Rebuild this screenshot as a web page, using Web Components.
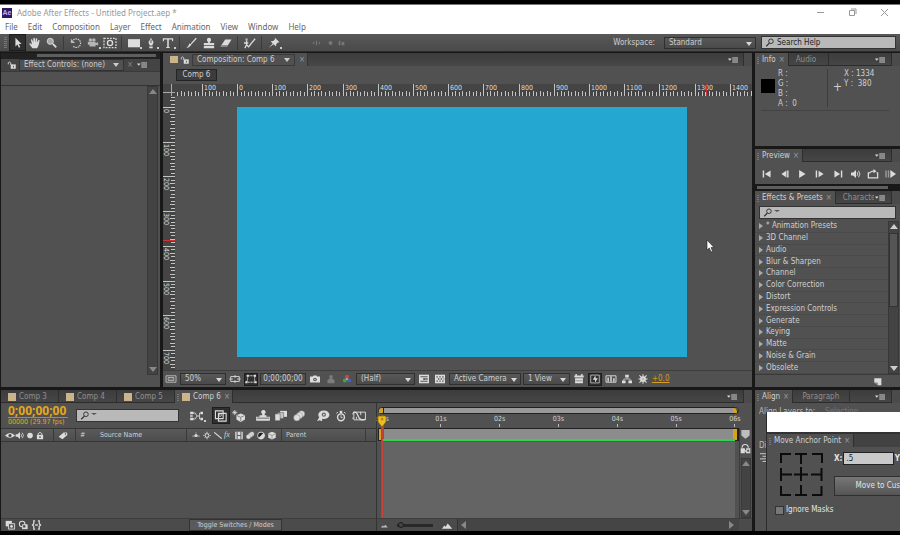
<!DOCTYPE html>
<html lang="en">
<head>
<meta charset="utf-8">
<title>Adobe After Effects - Untitled Project.aep *</title>
<style>
html,body{margin:0;height:100%}
body{background:#000;overflow:hidden;color:#cfcfcf;font:8px/12px "DejaVu Sans Condensed","Noto Sans",sans-serif}
</style>
</head>
<body>
<ae-app></ae-app>
<script>
const BASE = `*{box-sizing:border-box}
button,input,select{font:inherit;color:inherit;margin:0;padding:0;border:0;background:none;border-radius:0;outline:0}
:host{display:block;box-sizing:border-box}[hidden]{display:none}`;

function define(name, css, render) {
  customElements.define(name, class extends HTMLElement {
    connectedCallback() {
      if (this.shadowRoot) return;
      const root = this.attachShadow({mode: 'open'});
      root.innerHTML = `<style>${BASE}${css}</style>${typeof render === 'function' ? render(this) : render}`;
    }
  });
}
const attr = (el, n, d = '') => el.getAttribute(n) ?? d;

/* Icons are drawn in a 16 x 14 box with currentColor. */
const S = 'fill="none" stroke="currentColor"';
const ICONS = {
  arrow: '<path d="M5 1v10l2.400-2.200L9 12.500l1.600-.7L9 8.300h3.200z"/>',
  hand: '<path d="M5 13L1.500 8.500q-.6-1.600.9-1.300L4.500 8.800 3.300 3.500q0-1.200 1.300-.8L6 6.500 6 1.600q.9-1.400 1.800 0L8.200 6.300l.8-4.500q1.100-1 1.700.2L10.300 6.800l1.500-3q1.200-.8 1.600.3L12.300 9.300 10.500 13z"/>',
  zoom: `<circle cx="6" cy="5" r="3.600" fill="#a8a8a8" stroke="currentColor"/><path ${S} stroke-width="2" d="M9 8l4 4"/>`,
  rotate: `<path ${S} stroke="#aaa" stroke-width="1.300" stroke-dasharray="1.600 1" d="M5 3.500a5 5 0 1 1-.5 7"/><path fill="#bbb" d="M2 2v5h5z"/>`,
  cam: '<g fill="#b5b5b5"><circle cx="5" cy="3.500" r="2"/><circle cx="9" cy="3.500" r="2"/><path d="M2 5.500h9v1.500l3-1v4l-3-1v2H4V9H2z"/></g>',
  pan: `<circle cx="8" cy="7" r="3" ${S} stroke-width="1.600"/><path ${S} stroke-width="1.500" stroke-dasharray="2 1.500" d="M1 1.500h14v11H1z"/>`,
  rect: '<path d="M1 2.500h14v9.500H1z"/>',
  pen: `<path d="M8 1L5 6l1.500 4h3L11 6zM6 11h4v2H6z"/><path stroke="#444" d="M8 3v4"/>`,
  type: '<path d="M2 1.500h12v3.500h-1l-.6-2H8.900V11.600l1.300.5v.7H5.800v-.7l1.300-.5V3H3.600L3 5H2z"/>',
  brush: `<path ${S} stroke-width="1.500" d="M13 1.500L7 8"/><path d="M7.500 8.500Q5 13 1.500 12.500 4 11 5 7.500z"/>`,
  stamp: '<circle cx="8" cy="3.500" r="2.500"/><path d="M7 5h2v2h5v2.500H2V7h5zM2 10.500h12V13H2z"/>',
  eraser: '<path d="M7 3h7.500L9 11.500H1.500z"/><path fill="#777" d="M3 9.500h7l-1 2H1.500z"/>',
  roto: `<circle cx="4" cy="3" r="1.500" fill="#aaa"/><path ${S} stroke="#aaa" stroke-width="1.500" d="M1 7h5M4 4v5l-2 4M4 9l3 3"/><path ${S} stroke-width="1.500" d="M14 2L9 8l-2 3"/>`,
  pin: '<path d="M9 1l5.500 5-2 .5-2 2 0 2.500-3-2.500L2 12.500 6.500 7.500 4 5l3-.3 2-1.700z"/>',
  mini1: '<g fill="#777"><path d="M1 7l3-3v6zM15 7l-3-3v6z"/><path d="M7 3h2v8H7z"/></g>',
  mini2: '<g fill="#777"><circle cx="8" cy="7" r="3.500"/></g>',
  mini3: '<g fill="#777"><path d="M3 3h3v8H3zM8 5h5v6H8z"/></g>',
  lock: `<path ${S} stroke-width="1.400" d="M2 6V3.500q1.700-3 4 0V7"/><path d="M6 6h8v7H6z"/><path fill="#444" d="M9.500 8h1.400v3H9.500z"/>`,
  menu: '<path d="M1 5h5L3.500 8z"/><path fill="#999" d="M7 3h8v8H7z"/><path stroke="#666" d="M7 5.500h8M7 8.500h8"/>',
  first: '<path d="M2 2h2v10H2zM13 2v10L5 7z"/>',
  prev: '<path d="M10 2v10L3 7zM11 2h2v10h-2z"/>',
  play: '<path d="M4 1.500v11l9-5.500z"/>',
  next: '<path d="M2 2h2v10H2zM6 2.500v9L13 7z"/>',
  last: '<path d="M3 2v10l8-5zM12 2h2v10h-2z"/>',
  sound: `<path d="M1 5h3l4-3.500v11L4 9H1z"/><path ${S} stroke="#999" stroke-width="1.300" d="M9.500 4.500q2 2.500 0 5M11.500 2.500q4 4.500 0 9"/>`,
  loop: `<path ${S} stroke-width="1.800" d="M4 5.500H1.500v7h13v-7H13M4 5q1-2 5-2"/><path d="M8.500 0L13 3 8.500 6z"/>`,
  ram: '<path fill="#999" d="M0 2h2v10H0zM3.500 2h2v10h-2z"/><path d="M7 1.500v11L15 7z"/>',
  grab: `<path ${S} stroke="#aaa" d="M1 2.500h14v9H1z"/><path ${S} stroke="#aaa" d="M4 5h8v4H4z"/><path fill="#aaa" d="M6 6h1v2H6zM9 6h1v2H9z"/>`,
  safe: `<path ${S} stroke-width="1.200" d="M2 3.500h12v7H2zM8 1.500v4M8 8.500v4M0 7h5M11 7h5"/>`,
  mask: `<path ${S} stroke-width="1.300" d="M3 2.500h11q-2 4 0 9H2Q4 7 3 2.500" stroke-dasharray="3 1"/><path d="M2 1h3v3H2zM12 1h3v3h-3zM0 10h3v3H0zM13 10h3v3h-3z"/>`,
  photo: '<path d="M1 3.500h4L6 2h4l1 1.500h4V12H1z"/><circle cx="8" cy="7.700" r="2.500" fill="#555"/><circle cx="8" cy="7.700" r="1" />',
  person: '<g fill="#7c7c7c"><circle cx="8" cy="4" r="2.500"/><path d="M6 6h4l3 3v4H3V9z"/></g>',
  rgb: '<circle cx="8" cy="4" r="2.800" fill="#c84b41"/><circle cx="5" cy="9" r="2.800" fill="#48a04c"/><circle cx="11" cy="9" r="2.800" fill="#4b5fc9"/><path fill="#ddd" d="M7 6h2v2H7z"/>',
  roi: `<path d="M1 1h14v12H1z"/><path fill="#555" d="M3 3h10v1.500H3zM3 9.500h10V11H3zM7 5.500h6v3H7z"/><path d="M9 6.500h3v1H9z"/>`,
  grid: '<path d="M1 1h14v12H1z"/><path stroke="#555" stroke-dasharray="2 2" stroke-width="2" d="M3 4h11M5 7h9M3 10h11"/>',
  cal: '<path d="M3 0h2v2H3zM11 0h2v2h-2zM1.500 2h13v3h-13zM2.500 6h11v7h-11z"/><path stroke="#777" d="M3 9.500h10"/>',
  fast: `<path ${S} d="M2 1.500h12v11H2z"/><path d="M8.500 2L5 8h3v4l4-6H9z"/>`,
  bars: `<path ${S} stroke-width="1.300" d="M1 2.500h14v9H1z"/><path d="M3 5h2v6H3zM7 3h2v8H7zM11 6h2v5h-2z"/>`,
  flow: `<path d="M5.500 1h5v4h-5zM1 9h5v4H1zM10 9h5v4h-5z"/><path ${S} d="M8 5v2M3.500 9V7h9v2"/>`,
  expo: `<circle cx="8" cy="7" r="4"/><path ${S} stroke-width="1.500" d="M8 .5v13M1.500 7h13M3 2l10 10M13 2L3 12"/><circle cx="8" cy="7" r="1" fill="#777"/>`,
  mag: '<circle cx="9.500" cy="5" r="3.700" fill="none" stroke="#2c2c2c" stroke-width="1.400"/><path d="M7 8l-5 5" stroke="#2c2c2c" stroke-width="1.800"/>',
  graph: `<path d="M0 2h4v3H0zM0 6h3v2H0zM0 9h4v3H0zM12 2h3v3h-3zM12 9h3v3h-3z"/><path ${S} d="M4 3.500h2l2 3.500-2 3.500H4M8 7h3M12 3.500h-1V10.500h1"/>`,
  layers: `<path ${S} stroke-width="1.300" d="M1.500 1h9v9h-9zM5 4h9v9H5z"/><circle cx="7" cy="6" r="1.500" ${S}/>`,
  draft: `<path d="M10 4l5 2v5l-5 3-5-3V6z"/><path stroke="#777" fill="none" d="M5.500 6.500L10 8.500l4.500-2M10 8.500V13"/><path ${S} stroke-width=".9" d="M3 0v6M0 3h6M1 1l4 4M5 1L1 5"/>`,
  shy: '<path d="M0 8h4V6h3V4.500a2.500 2.500 0 1 1 3 0V6h2v2h4v4.500H0z"/><path stroke="#555" d="M1 9.500h14"/>',
  blend: '<path d="M7 1h8v7H7z"/><path fill="#c4c4c4" stroke="#555" stroke-width=".6" d="M4 3h7v7H4z"/><path stroke="#555" stroke-width=".6" d="M1 4.500h6v8H1z"/>',
  blur: '<g stroke="#777" stroke-width=".5"><circle cx="11" cy="4.500" r="3.700"/><circle cx="8.500" cy="6.500" r="3.700"/><circle cx="5.500" cy="9" r="3.700"/></g>',
  brain: '<ellipse cx="9" cy="5.500" rx="6.500" ry="5"/><path d="M4 8l-3 5 3-1 3 1V9z"/><circle cx="9" cy="5.500" r="2.500" fill="#666"/><circle cx="9" cy="5.500" r="1"/>',
  watch: `<circle cx="8" cy="8.500" r="4" ${S} stroke-width="1.700"/><path d="M6.500 1h3v3h-3z"/><path ${S} d="M8 6v3h2M2.500 4l2-1.500M13.500 4l-2-1.500"/>`,
  curve: `<path ${S} stroke-width="1.100" d="M2 2.500h13.500v9H2zM0 4.500h2M0 9.500h2M5 8v3M10 2v4"/><path ${S} stroke-width="1.500" d="M1 3q4-2 6 4t8 4"/>`,
  eye: '<path d="M0 7q8-8 16 0-8 7-16 0z"/><circle cx="8" cy="7" r="2.500" fill="#444"/>',
  dot: '<circle cx="8" cy="7" r="4.500"/>',
  padlock: `<path ${S} stroke-width="1.500" d="M5 7V4q3-4 6 0v3"/><path d="M3 6h10v7H3z"/><path fill="#555" d="M7 8h2v3H7z"/>`,
  tag: '<path d="M1 9l8-7h5.500L15 6 7 13z"/><circle cx="12" cy="4.500" r="1.200" fill="#444"/>',
  shy2: `<circle cx="8" cy="7" r="2.500"/><path ${S} d="M2 8h4M10 8h4M8 2v2"/>`,
  sun: `<circle cx="8" cy="7" r="3" ${S} stroke-width="1.600"/><path ${S} stroke-width="1.400" d="M8 1v2M8 11v2M2 7h2M12 7h2M4 3l1 1M12 3l-1 1M4 11l1-1M12 11l-1-1"/>`,
  slash: `<path ${S} stroke-width="2" d="M2 2l12 10"/>`,
  film: '<path d="M2 1h12v12H2z"/><path stroke="#555" stroke-width="1.500" d="M5 1v12M11 1v12M5 7h6"/>',
  half: `<circle cx="8" cy="7" r="5.500" fill="#222" stroke="currentColor" stroke-width="1.500"/><path d="M4 11A5.500 5.500 0 0 0 12 3z"/>`,
  cube: '<path d="M8 1l6 2.500v7L8 13.500l-6-3v-7z"/><path fill="none" stroke="#777" d="M2 4l6 3 6-3M8 7v6"/>',
  copy: `<path d="M1 1h9v8H1z"/><path fill="#555" stroke="currentColor" stroke-width="1.300" d="M5 5h9v8H5z"/><circle cx="9.500" cy="9" r="2"/>`,
  circ: `<circle cx="6" cy="5.500" r="4" ${S} stroke-width="1.500"/><path d="M6 6h8v7H6z"/><circle cx="9" cy="9" r="2" fill="#555"/>`,
  braces: `<path ${S} stroke-width="1.800" d="M6 1H4v4L2 7l2 2v4h2M10 1h2v4l2 2-2 2v4h-2"/><path d="M6 6h4v2H6z"/>`,
  hillS: '<path fill="#bbb" d="M3 10l3-3 2 1 2-2 4 4z"/>',
  hillL: '<path d="M0 12l4-5 2 2 3-5 3 3 4 5z"/>',
  marker: '<path fill="#bdbdbd" d="M2 1h12v8l-6 5-6-5z"/>',
  comp: `<path d="M1 6h6v7H1zM9 6h6v7H9z"/><path fill="#555" d="M10.500 8h3v3h-3z"/><path ${S} stroke-width="1.600" d="M3 5a4.500 4.500 0 0 1 9 0M5 7l5 5"/>`,
  newfile: '<path d="M3 2h11v11H8V9H3z"/><path fill="#888" d="M3 9h5v4z"/>',
  dist: `<path ${S} d="M1 2h13M4 5h8M1 8h13M4 11h8"/>`
};

define('ae-icon', `:host{width:14px;height:12px;flex:none;color:#dcdcdc}
svg{display:block;width:100%;height:100%}`,
  el => `<svg viewBox="0 0 16 14" fill="currentColor" aria-hidden="true">${ICONS[attr(el, 'name')]}</svg>`);

/* Icon button; "on" gives it the pressed look, "more" a corner mark. */
define('ae-tool', `:host{flex:none;width:17px;height:17px}
button{display:grid;place-items:center;width:100%;height:100%;position:relative}
:host([on]) button{background:#2f2f2f;border:1px solid #1d1d1d}
:host([more]) button::after{content:"";position:absolute;right:0;bottom:2px;width:2px;height:2px;background:#ccc}
ae-icon{width:var(--w,14px);height:var(--h,12px)}`,
  el => `<button aria-label="${attr(el, 'label', attr(el, 'name'))}"><ae-icon name="${attr(el, 'name')}"></ae-icon></button>`);

define('ae-select', `:host{flex:none;position:relative;height:12px}
select{appearance:none;display:block;width:100%;height:100%;padding:0 0 0 4px;line-height:10px;background:linear-gradient(#585858,#4a4a4a);border:1px solid #303030}
:host::after{content:"";position:absolute;right:4px;top:5px;border:3px solid transparent;border-top:4px solid #d8d8d8;border-bottom:0;pointer-events:none}`,
  el => `<select aria-label="${attr(el, 'label')}"><option>${attr(el, 'value')}</option></select>`);

define('ae-search', `:host{display:flex;align-items:center;height:12px;background:#b9b9b9;border:1px solid #333;color:#1d1d1d}
ae-icon{width:10px;height:9px;margin-left:3px}
i{width:5px;border:3px solid transparent;border-top:2px solid #555;border-bottom:0;margin:0 0 3px 1px}
input{flex:1;min-width:0;padding-left:2px;height:10px;line-height:10px}`,
  el => `<ae-icon name="mag"></ae-icon>${el.hasAttribute('value') ? '' : '<i></i>'}<input aria-label="${attr(el, 'label')}" value="${attr(el, 'value')}">`);

define('ae-tab', `:host{flex:none;height:13px;color:#8f8f8f;border-right:1px solid #2e2e2e}
:host([active]){background:#515151;color:#d0d0d0}
button{display:flex;align-items:center;height:100%;width:100%;padding:0 3px 0 7px;white-space:nowrap;position:relative}
:host([active]) button::before{content:"";position:absolute;left:2px;top:4px;width:2px;height:7px;background:repeating-linear-gradient(#777 0 1px,transparent 1px 2px)}
i{flex:none;width:8px;height:8px;background:#c9b48b;margin-right:3px}
b{font-weight:400;color:#999;margin-left:3px}`,
  el => `<button role="tab">${el.hasAttribute('swatch') ? '<i></i>' : ''}<slot></slot>${el.hasAttribute('active') ? '<b>×</b>' : ''}</button>`);

/* Panel: a row of tabs over a body. */
define('ae-panel', `:host{display:flex;flex-direction:column;min-width:0;min-height:0;background:#515151;overflow:hidden}
header{flex:none;display:flex;align-items:center;height:13px;background:linear-gradient(#3c3c3c,#474747);box-shadow:inset 0 -1px #2c2c2c}
.tabs{display:flex;min-width:0;overflow:hidden;flex:1}
button{width:13px;height:12px;flex:none;margin-right:4px}
button ae-icon{width:12px;height:10px}
i{width:9px;height:13px;flex:none;border-left:1px solid #2e2e2e;background:#4b4b4b}
.body{flex:1;min-height:0;display:flex;flex-direction:column}`,
  `<header><div class="tabs" role="tablist"><slot name="tab"></slot></div><button aria-label="Panel menu"><ae-icon name="menu"></ae-icon></button><i></i></header><div class="body"><slot></slot></div>`);

define('ae-scrollbar', `:host{display:flex;flex-direction:column;justify-content:space-between;align-items:center;width:10px;padding:2px 0;background:#434343;border:1px solid #383838;position:relative}
i{border:4px solid transparent}
.u{border-bottom:5px solid var(--a,#888);border-top:0}.d{border-top:5px solid var(--a,#888);border-bottom:0}
.t{flex:none;align-self:stretch;height:50%;background:#555;border:1px solid #333;margin:4px 0 auto}`,
  el => `<i class="u"></i>${el.hasAttribute('thumb') ? '<span class="t"></span>' : ''}<i class="d"></i>`);

define('ae-titlebar', `:host{display:flex;align-items:center;height:16px;background:#fff;color:#999;font:8px/14px "Noto Sans",sans-serif;border-top:1px solid #777;padding-left:2px}
b{width:10px;height:10px;background:#2a1a5e;color:#c9a8ff;font:700 7px/10px "Liberation Sans",sans-serif;text-align:center;margin-right:5px}
span{flex:1}
button{width:32px;height:14px;display:grid;place-items:center}
svg{width:9px;height:9px;fill:none;stroke:#999}`,
  `<b>Ae</b><span>Adobe After Effects - Untitled Project.aep *</span>
  <button aria-label="Minimize"><svg viewBox="0 0 9 9"><path d="M1 4.500h7"/></svg></button>
  <button aria-label="Restore"><svg viewBox="0 0 9 9"><path d="M1.500 2.500h5v5h-5zM3 1h5v5"/></svg></button>
  <button aria-label="Close"><svg viewBox="0 0 9 9"><path d="M1 1l7 7M8 1L1 8"/></svg></button>`);

define('ae-menubar', `:host{display:flex;gap:10px;height:14px;padding:0 5px;background:#fff;color:#666;font:8px/13px "Noto Sans",sans-serif}
button{padding-bottom:2px}`,
  () => ['File', 'Edit', 'Composition', 'Layer', 'Effect', 'Animation', 'View', 'Window', 'Help'].map(t => `<button>${t}</button>`).join(''));

define('ae-toolbar', `:host{display:flex;align-items:center;height:18px;background:linear-gradient(#585858,#4a4a4a);border-bottom:1px solid #2c2c2c;padding:0 4px}
.g{width:3px;height:12px;margin-right:2px;background:repeating-linear-gradient(#777 0 1px,transparent 1px 2px)}
s{width:1px;height:14px;background:#3b3b3b;margin:0 3px}
.m{margin-left:26px;--w:9px;--h:8px}
.m2{width:11px;--w:9px;--h:8px}
label{margin-left:auto;display:flex;align-items:center;gap:9px}
ae-select{width:92px}ae-search{width:135px;height:13px;margin-left:5px}`,
  () => {
    const t = (n, x = '') => `<ae-tool name="${n}" ${x}></ae-tool>`;
    return `<span class="g"></span>${t('arrow', 'on')}${t('hand')}${t('zoom')}<s></s>${t('rotate')}${t('cam', 'more')}${t('pan')}<s></s>${t('rect', 'more')}${t('pen', 'more')}${t('type', 'more')}<s></s>${t('brush')}${t('stamp')}${t('eraser')}<s></s>${t('roto')}<s></s>${t('pin', 'more')}
    ${t('mini1', 'class="m"')}${t('mini2', 'class="m2"')}${t('mini3', 'class="m2"')}
    <label>Workspace: <ae-select label="Workspace" value="Standard"></ae-select></label><ae-search label="Search Help" value="Search Help"></ae-search>`;
  });

define('ae-effect-controls', `:host{display:flex;flex-direction:column;background:#515151;min-height:0}
.s{height:6px;background:#222;padding:1px 4px 2px 36px}.s i{display:block;height:3px;background:#5e5e5e}
header{display:flex;align-items:center;height:12px;background:#444;padding-left:6px;box-shadow:0 1px #3a3a3a}
.n{display:flex;align-items:center;justify-content:space-between;width:105px;height:12px;padding:0 4px;margin-left:2px;background:#515151;border:1px solid #333;color:#cfcfcf}
.n::after{content:"";border:3px solid transparent;border-top:4px solid #ccc;border-bottom:0}
b{font-weight:400;color:#888;margin:0 3px}
header ae-icon{width:10px;height:10px}.m ae-icon{width:12px}
.body{flex:1;display:flex;justify-content:flex-end;margin-top:14px;padding:0 2px 12px 0;border-top:1px solid #333}
ae-scrollbar{width:11px}`,
  `<div class="s"><i></i></div><header><ae-icon name="lock"></ae-icon><button class="n">Effect Controls: (none)</button><b>×</b><button class="m" aria-label="Panel menu"><ae-icon name="menu"></ae-icon></button></header><div class="body"><ae-scrollbar></ae-scrollbar></div>`);

/* Ruler: ten ticks per hundred units, "origin" px before zero. */
define('ae-ruler', `:host{overflow:hidden;background:#444;min-width:0;min-height:0}
svg{display:block;width:100%;height:100%}text{font:7px "DejaVu Sans Condensed",sans-serif;fill:#ddd}`,
  el => {
    const v = el.hasAttribute('vertical'), o = +attr(el, 'origin'), p = +attr(el, 'pitch'), mark = +attr(el, 'mark');
    let d = '', t = '';
    for (let i = -20; i < 160; i++) {
      const x = Math.round(o + i * p / 10) + .5, big = i % 10 === 0, l = big ? 0 : i % 2 ? 8 : 7;
      if (x < 0) continue;
      d += v ? `M${l} ${x}H12` : `M${x} ${l}V12`;
      if (big) t += v ? `<text transform="translate(1 ${x + 1.5}) rotate(90)">${Math.abs(i * 10)}</text>` : `<text x="${x + 1.5}" y="6">${Math.abs(i * 10)}</text>`;
    }
    return `<svg aria-hidden="true"><path d="${d}" stroke="#c4c4c4"/>${t}<path stroke="#c33" d="${v ? `M0 ${mark}.5H12` : `M${mark}.5 0V12`}"/></svg>`;
  });

define('ae-viewer', `:host{display:flex;flex-direction:column;background:#515151;min-width:0;min-height:0}
header{display:flex;align-items:center;height:13px;background:linear-gradient(#3c3c3c,#474747)}
.l{display:flex;align-items:center;height:13px;padding-left:7px;background:#515151;border-right:1px solid #333;gap:2px}
.l i{width:8px;height:7px;background:#c9b48b}.l ae-icon{width:10px;height:10px}
.n{display:flex;align-items:center;justify-content:space-between;width:103px;height:12px;padding:0 4px;border:1px solid #3a3a3a}
.n::after{content:"";border:3px solid transparent;border-top:4px solid #ccc;border-bottom:0}
b{font-weight:400;color:#999;margin:0 2px}
.m{margin-left:auto;margin-right:4px}.m ae-icon{width:12px;height:10px}
.e{width:9px;height:13px;border-left:1px solid #2e2e2e;background:#4b4b4b}
.c{height:18px;padding:3px 13px}.c button{width:41px;height:12px;line-height:10px;background:#3c3c3c;border:1px solid #242424}
.v{flex:1;min-height:0;display:grid;grid-template:12px 1fr/12px 1fr}
.x{background:linear-gradient(#aaa,#aaa) 8px 0/1px 100% no-repeat,linear-gradient(#aaa,#aaa) 0 8px/100% 1px no-repeat,#444}
.k{padding:11px 65px 13px 62px;display:flex}.k div{flex:1;background:#24a7d0}
footer{display:flex;align-items:center;gap:2px;height:17px;padding-left:1px;border-top:1px solid #3d3d3d;overflow:hidden}
footer ae-tool{width:14px;height:13px;--w:12px;--h:10px}
.t{width:46px;height:12px;line-height:10px;border:1px solid #333;white-space:nowrap;font-size:8px}
a{color:#d99a22;text-decoration:underline}`,
  () => {
    const t = (n, x = '') => `<ae-tool name="${n}" ${x}></ae-tool>`;
    const s = (w, v, l) => `<ae-select style="width:${w}px" value="${v}" label="${l}"></ae-select>`;
    return `<header><div class="l"><i></i><ae-icon name="lock"></ae-icon><button class="n">Composition: Comp 6</button><b>×</b></div><button class="m" aria-label="Panel menu"><ae-icon name="menu"></ae-icon></button><span class="e"></span></header>
    <div class="c"><button>Comp 6</button></div>
    <div class="v"><span class="x"></span><ae-ruler origin="62" pitch="35.2" mark="531"></ae-ruler><ae-ruler vertical origin="11" pitch="34.7" mark="144"></ae-ruler><div class="k"><div></div></div></div>
    <footer>${t('grab')}${s(46, '50%', 'Magnification')}${t('safe')}${t('mask', 'on')}<button class="t">0;00;00;00</button>${t('photo')}${t('person')}${t('rgb')}${s(59, '(Half)', 'Resolution')}${t('roi')}${t('grid')}${s(72, 'Active Camera', 'Camera')}${s(47, '1 View', 'Layout')}${t('cal')}${t('fast', 'on')}${t('bars')}${t('flow')}${t('expo')}<a href="#exposure">+0.0</a></footer>`;
  });

define('ae-info', `:host{display:flex;height:80px;padding:0 11px 0 6px}
div{flex:1;display:flex;height:45px;border-bottom:1px solid #434343;padding-top:3px}
i{width:14px;height:14px;background:#000;margin:10px 3px 0 0}
p{margin:0;line-height:10px;white-space:pre}
.c{width:49px}
section{border-left:1px solid #3c3c3c;height:38px;display:flex;flex:1;padding-left:5px}
section span{font-size:12px;line-height:12px;margin:12px 2px 0 0}`,
  `<div><i></i><p class="c">R :\nG :\nB :\nA :  0</p><section><span>+</span><p>X : 1334\nY :  380</p></section></div>`);

define('ae-transport', `:host{display:flex;justify-content:space-between;height:22px;padding:3px 1px 0 4px}
ae-tool{--w:12px;--h:10px;width:16px}`,
  () => ['first', 'prev', 'play', 'next', 'last', 'sound', 'loop', 'ram'].map(n => `<ae-tool name="${n}"></ae-tool>`).join(''));

define('ae-effects', `:host{display:flex;flex-direction:column;flex:1;min-height:0}
ae-search{margin:2px 4px;height:13px}
.b{flex:1;display:flex;min-height:0;padding-right:1px}
ul{flex:1;margin:0;padding:0;display:flex;flex-direction:column;list-style:none}
li{flex:1;display:flex;align-items:center;gap:3px;padding-left:4px;border-bottom:1px solid #4a4a4a;line-height:10px}
li::before{content:"";border:3px solid transparent;border-left:4px solid #aaa;border-right:0}
ae-scrollbar{width:11px;--a:#ccc}
footer{height:13px;display:flex;justify-content:flex-end;padding-right:17px;border-top:1px solid #3a3a3a;align-items:center}
footer ae-icon{width:11px;height:9px}`,
  () => `<ae-search label="Search effects"></ae-search><div class="b"><ul>${['* Animation Presets', '3D Channel', 'Audio', 'Blur &amp; Sharpen', 'Channel', 'Color Correction', 'Distort', 'Expression Controls', 'Generate', 'Keying', 'Matte', 'Noise &amp; Grain', 'Obsolete'].map(t => `<li>${t}</li>`).join('')}</ul><ae-scrollbar thumb></ae-scrollbar></div><footer><ae-icon name="newfile"></ae-icon></footer>`);

define('ae-timeline', `:host{flex:1;display:flex;min-height:0}
.left{width:376px;flex:none;display:flex;flex-direction:column;border-right:1px solid #333}
.h{display:flex;align-items:center;height:25px;padding-left:7px}
.tc{width:68px;flex:none;color:#e5a81c;font-size:7px;line-height:9px;white-space:nowrap}
.tc b{display:block;font:700 12px/13px "Noto Sans",sans-serif;width:60px;border-bottom:1px solid #b98a24}
.h ae-search{width:103px;height:13px;margin-right:9px}
.h ae-tool{--w:14px;--h:12px;width:18px}.h .w{margin-left:6px}
.cols{display:flex;align-items:center;height:14px;border:1px solid #363636;border-width:1px 0;background:linear-gradient(#5a5a5a,#4d4d4d);font-size:7px;padding-left:4px}
.cols ae-icon{width:10px;height:9px}
.cols span{border-left:1px solid #3a3a3a;height:12px;line-height:12px;display:flex;align-items:center;padding-left:4px}
.tag{width:22px;margin-left:8px}.num{width:21px}
.grow{flex:1;border:0 !important}
.sw{width:95px}.sw ae-icon{margin-right:1px}.sw em{width:10px;font-size:8px;font-family:"Liberation Serif",serif}
.par{width:84px}.end{width:11px}
.f{display:flex;align-items:center;height:13px;padding-left:4px;border-top:1px solid #3d3d3d;background:#4b4b4b;margin-top:auto}
.f ae-icon{width:11px;height:10px;margin-right:2px}
.f button{width:93px;height:12px;line-height:10px;margin-left:auto;margin-right:94px;background:#5a5a5a;border:1px solid #333;font-size:7px;white-space:nowrap}
.right{flex:1;min-width:0;display:flex;flex-direction:column;position:relative}
.nav,.wa{margin:0 13px 0 1px;display:flex;justify-content:space-between;background:#999;border:1px solid #222}
.nav{height:7px;margin-top:4px;border-radius:4px}
.nav i,.wa i{width:5px;background:#d9a21b;border-right:1px solid #222}
.nav i:first-child{border-radius:4px 0 0 0}.nav i:last-child{border-radius:0 4px 0 0}
.time{height:14px;margin:0 17px 0 5px;display:flex;justify-content:space-between;font-size:7px;color:#d4d4d4}
.time span{width:0;display:flex;flex-direction:column;align-items:center;line-height:10px}
.time span::after{content:"";width:1px;height:3px;background:#bbb}
.wa{height:13px;background:#8c8c8c}
.gr{height:3px;margin:-2px 17px 0 6px;background:#2fd54b;border-bottom:1px solid #267b35;z-index:1}
.track{flex:1;margin:0 17px 0 6px;background:#646464}
.fr{display:flex;align-items:center;height:13px;border-top:1px solid #3d3d3d;padding-left:1px;background:#4b4b4b}
.fr ae-icon{width:12px;height:9px}
.fr input{appearance:none;width:36px;height:3px;background:#292929;margin:0 8px 0 7px}
.fr input::-webkit-slider-thumb{appearance:none;width:6px;height:6px;background:#444;border:1px solid #1d1d1d;border-radius:3px}
.bar{flex:1;height:12px;margin:0 13px 0 4px;background:#454545;border-left:1px solid #333;display:flex;justify-content:space-between;align-items:center;padding:0 5px 0 3px}
.bar i{border:4px solid transparent}.bar i:first-child{border-right:5px solid #888;border-left:0}.bar i:last-child{border-left:5px solid #888;border-right:0}
.head{position:absolute;left:4px;top:12px;bottom:13px;width:3px;background:linear-gradient(90deg,#8d4844,#c8433d,#8d4844)}
.head svg{position:absolute;left:-4px;top:0;width:10px;height:12px}
.side{position:absolute;right:1px;top:25px;bottom:13px;width:12px;display:flex;flex-direction:column;align-items:center;gap:3px;border-left:1px solid #3a3a3a}
.side ae-scrollbar{flex:1}.side ae-icon{width:11px;height:12px}`,
  () => {
    const t = (n, x = '') => `<ae-tool name="${n}" ${x}></ae-tool>`, ic = a => a.map(n => `<ae-icon name="${n}"></ae-icon>`).join('');
    return `<div class="left"><div class="h"><div class="tc"><b>0;00;00;00</b>00000 (29.97 fps)</div><ae-search label="Search layers"></ae-search>${t('graph', 'more')}${t('layers', 'on class="w"')}${t('draft')}${t('shy', 'class="w"')}${t('blend')}${t('blur')}${t('brain', 'class="w"')}${t('watch')}${t('curve')}</div>
    <div class="cols">${ic(['eye', 'sound', 'dot', 'padlock'])}<span class="tag">${ic(['tag'])}</span><span class="num">#</span><span class="grow">Source Name</span><span class="sw">${ic(['shy2', 'sun', 'slash'])}<em>fx</em>${ic(['film', 'blur', 'half', 'cube'])}</span><span class="par">Parent</span><span class="end"></span></div>
    <div class="f">${ic(['copy', 'circ', 'braces'])}<button>Toggle Switches / Modes</button></div></div>
    <div class="right"><div class="nav"><i></i><i></i></div>
    <div class="time">${[':00s', '01s', '02s', '03s', '04s', '05s', '06s'].map(x => `<span>${x}</span>`).join('')}</div>
    <div class="wa"><i></i><i></i></div><div class="gr"></div><div class="track"></div>
    <div class="fr"><ae-icon name="hillS"></ae-icon><input type="range" aria-label="Timeline zoom" value="4"><ae-icon name="hillL"></ae-icon><div class="bar"><i></i><i></i></div></div>
    <div class="head"><svg viewBox="0 0 10 12"><path fill="#edbd22" stroke="#765600" stroke-width=".6" d="M1 1h8v6l-4 5-4-5z"/><circle cx="5" cy="4" r="1.500" fill="#b58a12"/></svg></div>
    <div class="side"><ae-icon name="marker"></ae-icon><ae-icon name="comp"></ae-icon><ae-scrollbar></ae-scrollbar></div></div>`;
  });

define('ae-align', `:host{padding:3px 4px;line-height:12px;color:#bdbdbd}
p{margin:0 0 22px;display:flex;gap:10px;white-space:nowrap}
span{color:#777}`,
  `<p>Align Layers to: <span>Selection</span></p><div>Di</div><ae-icon name="dist"></ae-icon>`);

define('ae-anchor-window', `:host{display:flex;flex-direction:column;background:#515151;overflow:hidden;border-left:1px solid #2b2b2b;color:#e4e4e4}
.cap{height:21px;background:#fff;margin-left:-1px;border-bottom:1px solid #333}
header{height:14px;background:#424242;display:flex;border-top:1px solid #333}
.b{flex:1;display:grid;grid-template:44px auto/44px minmax(0,1fr);gap:8px 11px;padding:5px 0 0 12px;align-content:start}
svg{width:44px;height:44px;fill:none;stroke:#0c0c0c;stroke-width:2}
.r{display:flex;flex-direction:column;justify-content:space-between}
.x{display:flex;align-items:center;gap:1px;font-weight:700}
.x input{flex:1;min-width:0;height:13px;background:#c9c9c9;color:#222;border:1px solid #222;padding-left:2px;font-weight:400}
.m{height:20px;background:linear-gradient(#777,#555);border:1px solid #2f2f2f;border-right:0;text-align:right;white-space:nowrap}
.i{grid-column:1/3;margin-left:-4px;display:flex;align-items:center;gap:2px}
.i input{appearance:none;width:9px;height:9px;background:#777;border:1px solid #333}`,
  `<div class="cap"></div><header><ae-tab active>Move Anchor Point</ae-tab></header>
  <div class="b"><svg viewBox="0 0 44 44"><path d="M2 11V2h10M16 2h12M22 2v10M33 2h10v9M2 16v13M2 22.500h11M15 22.500h14M22 15v14M32 22.500h11M42.500 16v13M2 34v9h10M16 43h12M22 43V33M33 43h9.500v-9"/></svg>
  <div class="r"><div class="x"><label for="x">X:</label><input id="x" value=".5"><span>Y</span></div><button class="m">Move to Cus</button></div>
  <label class="i"><input type="checkbox">Ignore Masks</label></div>`);

define('ae-app', `:host{display:flex;flex-direction:column;height:100vh;padding:4px 0;position:relative;overflow:hidden;background:#000}
main{flex:1;min-height:0;display:grid;grid-template:1fr 141px/159px 1fr 145px;gap:3px;padding:1px 0 0 1px;background:#181818}
.side{display:flex;flex-direction:column;min-height:0}
.g{height:3px;flex:none}.bar{height:7px;flex:none;padding:2px 12px 2px 2px}.bar i{display:block;height:3px;background:#5e5e5e}
.fx{flex:1}.tl{grid-column:1/3}
.tl ae-tab{width:58px}
.fx ae-tab:nth-of-type(2){border:0}
ae-anchor-window{position:absolute;right:0;top:412px;bottom:4px;width:134px}
.ptr{position:absolute;left:706px;top:239px;width:9px;height:14px}`,
  `<ae-titlebar></ae-titlebar><ae-menubar></ae-menubar><ae-toolbar></ae-toolbar>
  <main><ae-effect-controls></ae-effect-controls><ae-viewer></ae-viewer>
  <div class="side"><ae-panel><ae-tab slot="tab" active>Info</ae-tab><ae-tab slot="tab">Audio&nbsp;&nbsp;&nbsp;&nbsp;</ae-tab><ae-info></ae-info></ae-panel><span class="g"></span>
  <ae-panel><ae-tab slot="tab" active>Preview</ae-tab><ae-transport></ae-transport></ae-panel><div class="bar"><i></i></div>
  <ae-panel class="fx"><ae-tab slot="tab" active>Effects &amp; Presets</ae-tab><ae-tab slot="tab">Characte</ae-tab><ae-effects></ae-effects></ae-panel></div>
  <ae-panel class="tl"><ae-tab slot="tab" swatch>Comp 3</ae-tab><ae-tab slot="tab" swatch>Comp 4</ae-tab><ae-tab slot="tab" swatch>Comp 5</ae-tab><ae-tab slot="tab" swatch active>Comp 6</ae-tab><ae-timeline></ae-timeline></ae-panel>
  <ae-panel><ae-tab slot="tab" active>Align</ae-tab><ae-tab slot="tab">&nbsp;Paragraph&nbsp;&nbsp;&nbsp;</ae-tab><ae-align></ae-align></ae-panel></main>
  <ae-anchor-window></ae-anchor-window>
  <svg class="ptr" viewBox="0 0 9 14"><path fill="#fff" stroke="#222" stroke-width=".6" d="M1 1v10l2.300-2L5 13l1.600-.7L5 8.500h3z"/></svg>`);
</script>
</body>
</html>
